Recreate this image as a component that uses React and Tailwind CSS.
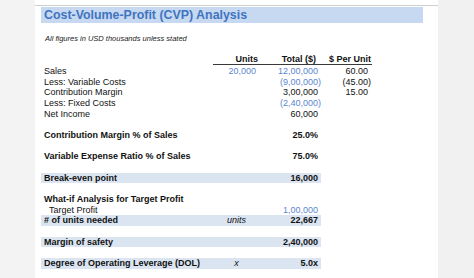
import React from 'react';

const FONT = { fontFamily: '"Liberation Sans", Arial, sans-serif' };

const ROWS = [
  { label: 'Sales', units: '20,000', unitsBlue: true, total: '12,00,000', totalBlue: true, per: '60.00' },
  { label: 'Less: Variable Costs', total: '(9,00,000)', totalBlue: true, per: '(45.00)' },
  { label: 'Contribution Margin', total: '3,00,000', per: '15.00' },
  { label: 'Less: Fixed Costs', total: '(2,40,000)', totalBlue: true },
  { label: 'Net Income', total: '60,000' },
  {},
  { label: 'Contribution Margin % of Sales', total: '25.0%', bold: true },
  {},
  { label: 'Variable Expense Ratio % of Sales', total: '75.0%', bold: true },
  {},
  { label: 'Break-even point', total: '16,000', bold: true, band: true },
  {},
  { label: 'What-if Analysis for Target Profit', bold: true },
  { label: 'Target Profit', total: '1,00,000', totalBlue: true, indent: true },
  { label: '# of units needed', units: 'units', unitsItalic: true, total: '22,667', bold: true, band: true },
  {},
  { label: 'Margin of safety', total: '2,40,000', bold: true, band: true },
  {},
  { label: 'Degree of Operating Leverage (DOL)', units: 'x', unitsItalic: true, total: '5.0x', bold: true, band: true },
];

function Num({ value }) {
  if (!value) return null;
  const neg = value.startsWith('(');
  return <span className={neg ? '' : 'pr-[3px]'}>{value}</span>;
}

function Row({ r }) {
  return (
    <div className="flex h-[10.68px] items-center text-[9px] leading-none text-[#111]">
      <div className={`flex w-[280px] h-full items-center ${r.band ? 'bg-[#dbe5f1]' : ''} ${r.bold ? 'font-bold' : ''}`}>
        <div className={`w-[172px] whitespace-nowrap ${r.indent ? 'pl-[8px]' : 'pl-[3px]'}`}>{r.label}</div>
        {r.unitsItalic ? (
          <div className="w-[47px] text-center italic font-normal">{r.units}</div>
        ) : (
          <div className={`w-[47px] text-right pr-[1px] ${r.unitsBlue ? 'text-[#5b86d0]' : ''}`}>
            <Num value={r.units} />
          </div>
        )}
        <div className={`w-[61px] text-right ${r.totalBlue ? 'text-[#5b86d0]' : ''}`}>
          <Num value={r.total} />
        </div>
      </div>
      <div className="w-[51px] text-right pr-[1px]">
        <Num value={r.per} />
      </div>
    </div>
  );
}

export default function App() {
  return (
    <div className="flex w-[474px] h-[278px] overflow-hidden bg-white" style={FONT}>
      <div className="w-[35px] h-full bg-[#f3f3f3]" />
      <div className="w-[403px] h-full bg-white pt-[5px]">
        <div className="border-t border-[#cfcfcf] pl-[6px] pt-[1px]">
          <div className="w-[382px] h-[16px] bg-[#c6d9f1] pl-[3px] flex items-center">
            <span className="text-[12.4px] font-bold text-[#3f74c0] leading-none">
              Cost-Volume-Profit (CVP) Analysis
            </span>
          </div>
          <div className="h-[11px] mt-[10px] pl-[4px] flex items-center text-[7.5px] italic text-[#222]">
            All figures in USD thousands unless stated
          </div>
          <div className="flex items-center mt-[11px] h-[10px] text-[9px] font-bold leading-none text-[#111]">
            <div className="w-[172px]" />
            <div className="flex border-b border-[#3a3a3a] h-full items-center">
              <div className="w-[47px] text-right pr-[2px]">Units</div>
              <div className="w-[61px] text-right pr-[5px]">Total ($)</div>
              <div className="w-[51px] text-right pr-[1px]">$ Per Unit</div>
            </div>
          </div>
          <div className="mt-[1px]">
            {ROWS.map((r, i) => (
              <Row key={i} r={r} />
            ))}
          </div>
        </div>
      </div>
      <div className="flex-1 h-full bg-[#f1f1f1]" />
    </div>
  );
}
